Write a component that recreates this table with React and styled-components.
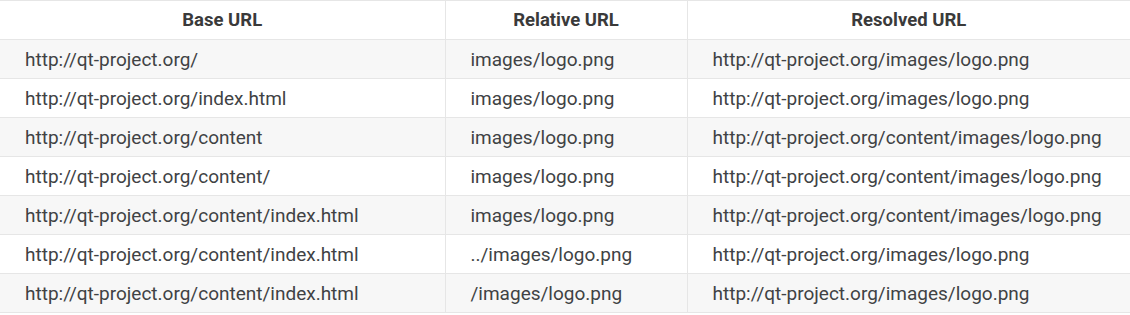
import React from 'react';
import styled, { createGlobalStyle } from 'styled-components';

const rows = [
    ['http://qt-project.org/', 'images/logo.png', 'http://qt-project.org/images/logo.png'],
    ['http://qt-project.org/index.html', 'images/logo.png', 'http://qt-project.org/images/logo.png'],
    ['http://qt-project.org/content', 'images/logo.png', 'http://qt-project.org/content/images/logo.png'],
    ['http://qt-project.org/content/', 'images/logo.png', 'http://qt-project.org/content/images/logo.png'],
    ['http://qt-project.org/content/index.html', 'images/logo.png', 'http://qt-project.org/content/images/logo.png'],
    ['http://qt-project.org/content/index.html', '../images/logo.png', 'http://qt-project.org/images/logo.png'],
    ['http://qt-project.org/content/index.html', '/images/logo.png', 'http://qt-project.org/images/logo.png'],
];

const App = () => {
    return (
        <>
            <GlobalStyle />
            <Table>
                <colgroup>
                    <col style={{ width: 445 }} />
                    <col style={{ width: 242 }} />
                    <col />
                </colgroup>
                <thead>
                    <tr>
                        <Head>Base URL</Head>
                        <Head>Relative URL</Head>
                        <Head>Resolved URL</Head>
                    </tr>
                </thead>
                <tbody>
                    {rows.map((r, i) => (
                        <Row key={i} $striped={i % 2 === 0}>
                            {r.map((c, j) => (
                                <Cell key={j}>{c}</Cell>
                            ))}
                        </Row>
                    ))}
                </tbody>
            </Table>
        </>
    );
};

const GlobalStyle = createGlobalStyle`
    body {
        margin: 0;
        background: #fff;
        font-family: Roboto, "Liberation Sans", sans-serif;
        color: #404244;
    }
`;

const Table = styled.table`
    width: 1130px;
    table-layout: fixed;
    border-collapse: collapse;
    border-top: 1px solid #e6e6e6;
    font-size: 19px;
`;

const Head = styled.th`
    height: 38px;
    padding: 0 25px;
    font-size: 18.5px;
    font-weight: 700;
    color: #3a3a3a;
    text-align: center;
    border-bottom: 1px solid #e6e6e6;
    border-left: 1px solid #e6e6e6;
    &:first-child {
        border-left: none;
    }
`;

const Row = styled.tr`
    background: ${p => (p.$striped ? '#f7f7f7' : '#fff')};
`;

const Cell = styled.td`
    height: 38px;
    padding: 0 25px;
    text-align: left;
    white-space: nowrap;
    border-bottom: 1px solid #e6e6e6;
    border-left: 1px solid #e6e6e6;
    &:first-child {
        border-left: none;
    }
`;

export default App;
